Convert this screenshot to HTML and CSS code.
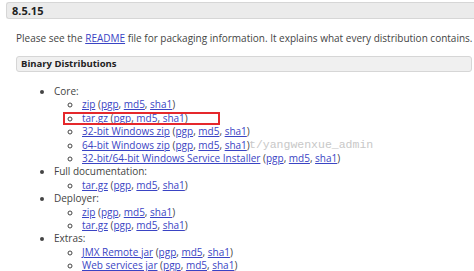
FILE: index.html
```html
<!DOCTYPE html>
<html lang="en">
<head>
    <meta charset="UTF-8">
    <title>Tomcat 8 Downloads</title>
    <link rel="stylesheet" href="styles.css">
</head>
<body>

    <!-- Release header -->
    <h3 class="release">8.5.15</h3>

    <div class="section">
        <p class="intro">Please see the <a href="#">README</a> file for packaging information. It explains what every distribution contains.</p>

        <h4 class="subhead">Binary Distributions</h4>

        <ul class="dist">
            <li>Core:
                <ul>
                    <li><a href="#">zip</a> (<a href="#">pgp</a>, <a href="#">md5</a>, <a href="#">sha1</a>)</li>
                    <li class="marked"><a href="#">tar.gz</a> (<a href="#">pgp</a>, <a href="#">md5</a>, <a href="#">sha1</a>)</li>
                    <li><a href="#">32-bit Windows zip</a> (<a href="#">pgp</a>, <a href="#">md5</a>, <a href="#">sha1</a>)</li>
                    <li class="stamped"><a href="#">64-bit Windows zip</a> (<a href="#">pgp</a>, <a href="#">md5</a>, <a href="#">sha1</a>)<span class="watermark">t/yangwenxue_admin</span></li>
                    <li><a href="#">32-bit/64-bit Windows Service Installer</a> (<a href="#">pgp</a>, <a href="#">md5</a>, <a href="#">sha1</a>)</li>
                </ul>
            </li>
            <li>Full documentation:
                <ul>
                    <li><a href="#">tar.gz</a> (<a href="#">pgp</a>, <a href="#">md5</a>, <a href="#">sha1</a>)</li>
                </ul>
            </li>
            <li>Deployer:
                <ul>
                    <li><a href="#">zip</a> (<a href="#">pgp</a>, <a href="#">md5</a>, <a href="#">sha1</a>)</li>
                    <li><a href="#">tar.gz</a> (<a href="#">pgp</a>, <a href="#">md5</a>, <a href="#">sha1</a>)</li>
                </ul>
            </li>
            <li>Extras:
                <ul>
                    <li><a href="#">JMX Remote jar</a> (<a href="#">pgp</a>, <a href="#">md5</a>, <a href="#">sha1</a>)</li>
                    <li><a href="#">Web services jar</a> (<a href="#">pgp</a>, <a href="#">md5</a>, <a href="#">sha1</a>)</li>
                </ul>
            </li>
        </ul>
    </div>

</body>
</html>
```

FILE: styles.css
```css
body {
    margin: 0;
    font-family: "Open Sans", sans-serif;
    color: #444;
    background-color: #fff;
    overflow: hidden;
}

a {
    color: #3a44c4;
}

.release {
    margin: 2px 0 0 6px;
    height: 15px;
    padding-left: 5px;
    font-size: 11px;
    line-height: 15px;
    color: #222;
    background-color: #ebebeb;
    border: 1px solid #d6d6d6;
    border-right: none;
    border-radius: 3px 0 0 3px;
}

.section {
    padding-left: 16px;
}

.intro {
    margin: 12px 0 0 0;
    font-size: 10px;
    line-height: 14px;
}

.subhead {
    margin: 11px 2px 0 0;
    height: 14px;
    padding-left: 4px;
    font-size: 9.5px;
    line-height: 14px;
    color: #222;
    background-color: #f0f0f0;
    border: 1px solid #d6d6d6;
    border-radius: 3px;
}

.dist {
    margin: 13px 0 0 0;
    padding-left: 38px;
    font-size: 10px;
    line-height: 13.4px;
}

.dist ul {
    margin: 0;
    padding-left: 28px;
    list-style-type: circle;
}

.marked {
    position: relative;
}

.marked::after {
    content: "";
    position: absolute;
    left: -19px;
    top: 0;
    width: 153px;
    height: 9px;
    border: 2px solid #e5282c;
}

.stamped {
    position: relative;
}

.watermark {
    position: absolute;
    left: 167px;
    top: -1px;
    font-family: "Liberation Mono", monospace;
    font-size: 11.5px;
    color: #c8c8c8;
}
```
